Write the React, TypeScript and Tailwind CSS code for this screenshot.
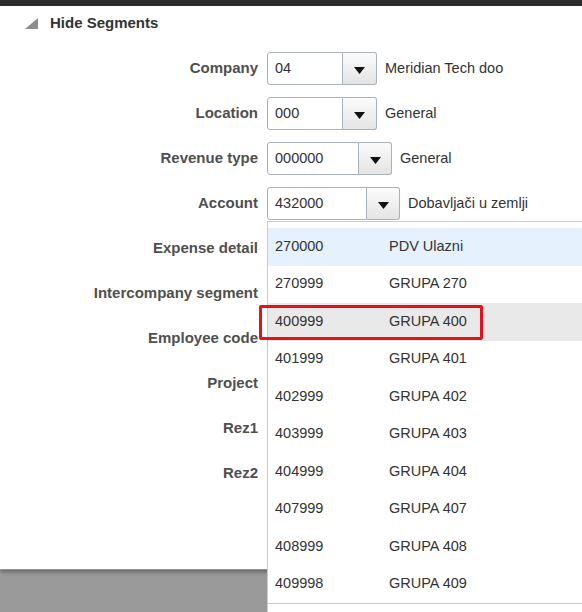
import React from "react";

const rows: { label: string; value?: string; w?: number; b?: number; desc?: string }[] = [
  { label: "Company", value: "04", w: 76, b: 34, desc: "Meridian Tech doo" },
  { label: "Location", value: "000", w: 76, b: 34, desc: "General" },
  { label: "Revenue type", value: "000000", w: 92, b: 33, desc: "General" },
  { label: "Account", value: "432000", w: 100, b: 33, desc: "Dobavljači u zemlji" },
  { label: "Expense detail" },
  { label: "Intercompany segment" },
  { label: "Employee code" },
  { label: "Project" },
  { label: "Rez1" },
  { label: "Rez2" },
];

const items: [string, string][] = [
  ["270000", "PDV Ulazni"],
  ["270999", "GRUPA 270"],
  ["400999", "GRUPA 400"],
  ["401999", "GRUPA 401"],
  ["402999", "GRUPA 402"],
  ["403999", "GRUPA 403"],
  ["404999", "GRUPA 404"],
  ["407999", "GRUPA 407"],
  ["408999", "GRUPA 408"],
  ["409998", "GRUPA 409"],
];

function Arrow() {
  return (
    <svg width="11" height="7" viewBox="0 0 11 7">
      <path d="M0 0 L11 0 L5.5 7 Z" fill="#111" />
    </svg>
  );
}

function Combo({ value, w, b }: { value: string; w: number; b: number }) {
  return (
    <div className="flex h-[33px]">
      <div
        className="flex items-center pl-[7px] border border-[#a9b1bb] rounded-l-[3px] bg-white text-[#333] text-[14.5px]"
        style={{ width: w }}
      >
        {value}
      </div>
      <div
        className="flex items-center justify-center border border-l-0 border-[#a9b1bb] rounded-r-[3px] bg-gradient-to-b from-[#fbfbfb] to-[#e4e4e4] pt-[3px]"
        style={{ width: b }}
      >
        <Arrow />
      </div>
    </div>
  );
}

export default function App() {
  return (
    <div
      className="relative w-[582px] h-[612px] overflow-hidden bg-[#9a9a9a]"
      style={{ fontFamily: '"Liberation Sans", Arial, sans-serif' }}
    >
      <div className="h-[6px] bg-[#2e2d2b]" />
      <div className="h-[564px] bg-white border-b border-[#8395aa] shadow-[0_2px_4px_rgba(0,0,0,0.35)]">
        <div className="flex items-center h-[32px] pt-[2px] pl-[25px] gap-[12px]">
          <svg width="13" height="11" viewBox="0 0 13 11">
            <path d="M13 0 L13 11 L0 11 Z" fill="#8c8c8c" />
          </svg>
          <span className="font-bold text-[15px] text-[#333]">Hide Segments</span>
        </div>
        <div className="flex flex-col pt-[8px]">
          {rows.map((r) => (
            <div key={r.label} className="flex items-center h-[45px]">
              <div className="w-[258px] text-right font-bold text-[15px] text-[#4f4f4f]">
                {r.label}
              </div>
              {r.value && (
                <div className="flex items-center ml-[9px] gap-[8px]">
                  <Combo value={r.value} w={r.w!} b={r.b!} />
                  <span className="text-[14.5px] text-[#333]">{r.desc}</span>
                </div>
              )}
            </div>
          ))}
        </div>
      </div>

      {/* dropdown popup */}
      <div className="absolute left-[267px] top-[221px] w-[330px] h-[400px] bg-white border border-[#c3cbd5]">
        <div className="pt-[6px]">
          {items.map(([code, name], i) => (
            <div
              key={code}
              className={`flex items-center h-[37.5px] pl-[7px] text-[14.5px] text-[#333] ${
                i === 0 ? "bg-[#e5f1fc]" : i === 2 ? "bg-[#e9e9e9]" : "bg-white"
              }`}
            >
              <span className="w-[114px]">{code}</span>
              <span>{name}</span>
            </div>
          ))}
        </div>
        <div className="border-t border-[#c3cbd5]" />
      </div>

      {/* annotation box */}
      <div className="absolute left-[259px] top-[305px] w-[224px] h-[35px] border-[3px] border-[#e8101a] rounded-[2px]" />
    </div>
  );
}
